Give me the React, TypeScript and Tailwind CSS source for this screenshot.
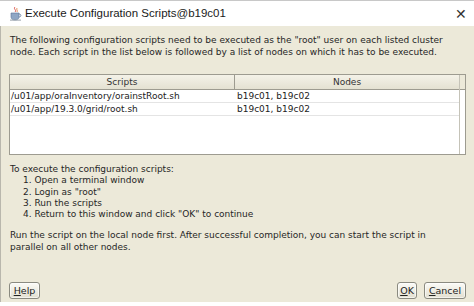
import React from 'react';

const rows = [
  { script: '/u01/app/oraInventory/orainstRoot.sh', nodes: 'b19c01, b19c02' },
  { script: '/u01/app/19.3.0/grid/root.sh', nodes: 'b19c01, b19c02' },
];

function JavaIcon() {
  return (
    <svg width="13" height="15" viewBox="0 0 13 15">
      <path d="M6 1 C4 3 8 4 6 6" stroke="#d9534f" strokeWidth="1" fill="none" />
      <path d="M8 2 C7 3.5 9 4.5 8 6" stroke="#e07a3a" strokeWidth="0.8" fill="none" />
      <path d="M2 7 H10 V11 C10 13 8 14 6 14 C4 14 2 13 2 11 Z" fill="#8fa6c4" stroke="#5b7397" strokeWidth="0.6" />
      <path d="M10 8 C12.5 8 12.5 11 10 11" stroke="#5b7397" strokeWidth="0.8" fill="none" />
      <rect x="1" y="13.6" width="11" height="1" fill="#9aa3ad" />
    </svg>
  );
}

function Btn({ children, className = '' }: { children: React.ReactNode; className?: string }) {
  return (
    <div
      className={`h-[17px] flex items-center justify-center rounded-[3px] border border-[#8a8a80] bg-gradient-to-b from-[#fbfbf7] to-[#e2dfd0] text-[9.5px] text-[#222] shadow-[inset_0_0_0_1px_rgba(255,255,255,0.6)] ${className}`}
    >
      {children}
    </div>
  );
}

export default function App() {
  return (
    <div className="w-[474px] h-[306px] bg-white overflow-hidden flex flex-col font-['DejaVu_Sans',sans-serif] text-[#262626]">
      {/* title bar */}
      <div className="h-[26px] shrink-0 flex items-center pl-[9px] pr-[7px] border-t border-[#c8c8c8] font-['Liberation_Sans',sans-serif]">
        <JavaIcon />
        <span className="ml-[3px] text-[11.5px] text-[#1a1a1a] leading-none">Execute Configuration Scripts@b19c01</span>
        <span className="ml-auto text-[14px] font-light text-[#333] leading-none">✕</span>
      </div>

      {/* dialog body */}
      <div className="h-[276px] shrink-0 bg-[#ece9d9] border-l border-[#b9b7ad] flex flex-col px-[8px] text-[9px] leading-[12px]">
        <p className="mt-[8px] pl-[1px]">
          The following configuration scripts need to be executed as the "root" user on each listed cluster
          <br />
          node. Each script in the list below is followed by a list of nodes on which it has to be executed.
        </p>

        {/* table */}
        <div className="mt-[16px] h-[81px] flex border border-[#9d9b90] bg-white">
          <div className="flex-1 flex flex-col">
            <div className="h-[15px] flex bg-gradient-to-b from-[#f4f2e8] to-[#e4e1d2] border-b border-[#9d9b90] text-[#333]">
              <div className="w-[225px] border-r border-[#9d9b90] flex items-center justify-center">Scripts</div>
              <div className="flex-1 flex items-center justify-center">Nodes</div>
            </div>
            {rows.map((r) => (
              <div key={r.script} className="h-[13px] flex border-b border-[#e4e4e4] text-[#222]">
                <div className="w-[225px] pl-[1px] flex items-center">{r.script}</div>
                <div className="flex-1 pl-[2px] flex items-center">{r.nodes}</div>
              </div>
            ))}
          </div>
          <div className="w-[6px] border-l border-[#c5c3b8] bg-white flex flex-col">
            <div className="h-[15px] bg-[#ece9d9] border-b border-[#9d9b90]" />
          </div>
        </div>

        <div className="mt-[9px] pl-[1px] leading-[11.3px]">
          <p>To execute the configuration scripts:</p>
          <ol className="pl-[13px]">
            <li>1. Open a terminal window</li>
            <li>2. Login as "root"</li>
            <li>3. Run the scripts</li>
            <li>4. Return to this window and click "OK" to continue</li>
          </ol>
        </div>

        <p className="mt-[9px] pl-[1px]">
          Run the script on the local node first. After successful completion, you can start the script in
          <br />
          parallel on all other nodes.
        </p>

        <div className="mt-auto mb-[3px] flex items-center">
          <Btn className="w-[31px]">
            <span><span className="underline">H</span>elp</span>
          </Btn>
          <Btn className="w-[20px] ml-auto">
            <span><span className="underline">O</span>K</span>
          </Btn>
          <Btn className="w-[42px] ml-[7px]">
            <span><span className="underline">C</span>ancel</span>
          </Btn>
        </div>
      </div>
      <div className="flex-1 bg-white" />
    </div>
  );
}
